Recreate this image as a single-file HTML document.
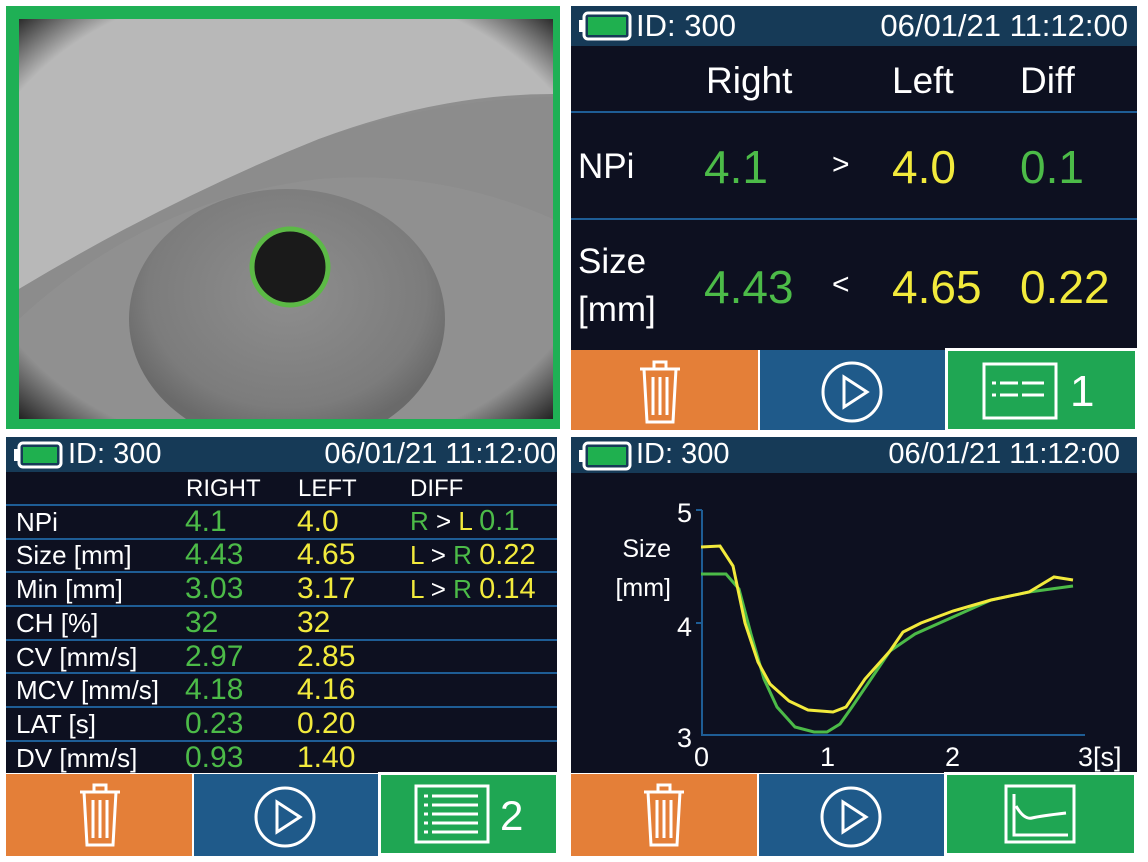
<!DOCTYPE html>
<html><head><meta charset="utf-8"><style>
*{margin:0;padding:0;box-sizing:border-box}
body{width:1148px;height:862px;background:#fff;position:relative;overflow:hidden;font-family:"Liberation Sans",sans-serif;color:#fff}
.a{position:absolute}
.hdr{background:#163a57}
.body{background:#0d1020}
.t{position:absolute;white-space:nowrap;line-height:1}
.g{color:#4cbb48}.y{color:#f2ea3c}
.ln{position:absolute;height:2px;background:#1e5d95}
.or{background:#e47f38}.bl{background:#1f5a8a}.gr{background:#1fa653;border:3px solid #fff}
</style></head><body>

<!-- Top-left eye -->
<div class="a" style="left:6px;top:6px;width:554px;height:423px;background:#1fb055"></div>
<svg class="a" style="left:19px;top:19px" width="534" height="400" viewBox="0 0 534 400">
<defs>
<radialGradient id="vig" cx="50%" cy="50%" r="72%"><stop offset="0.82" stop-color="#000" stop-opacity="0"/><stop offset="1" stop-color="#000" stop-opacity="0.85"/></radialGradient>
<radialGradient id="iris" cx="50%" cy="40%" r="55%"><stop offset="0" stop-color="#8e8e8e"/><stop offset="0.8" stop-color="#7c7c7c"/><stop offset="1" stop-color="#6a6a6a"/></radialGradient>
</defs>
<rect width="534" height="400" fill="#8e8e8e"/>
<path d="M0 0H534V75Q420 75 300 120Q150 180 0 270Z" fill="#b8b8b8"/>
<path d="M0 270Q150 180 300 120Q420 80 534 78V200Q420 150 300 160Q130 180 0 300Z" fill="#8c8c8c"/>
<path d="M0 300Q130 180 300 160Q420 150 534 200V400H0Z" fill="#909090"/>
<ellipse cx="268" cy="300" rx="158" ry="130" fill="url(#iris)"/>
<rect width="534" height="400" fill="url(#vig)"/>
<circle cx="271" cy="248" r="38" fill="#1a1a1a" stroke="#5cb946" stroke-width="5"/>
</svg>

<!-- Top-right -->
<div class="a body" style="left:571px;top:6px;width:566px;height:344px"></div>
<div class="a hdr" style="left:571px;top:6px;width:566px;height:40px"></div>
<svg class="a" style="left:578px;top:11px" width="56" height="30"><rect x="6" y="2" width="46" height="26" rx="4" fill="none" stroke="#fff" stroke-width="3"/><rect x="1" y="9" width="5" height="12" fill="#fff"/><rect x="10" y="6" width="38" height="18" fill="#1fb04f"/></svg>
<div class="t" style="left:636px;top:10px;font-size:31px">ID: 300</div>
<div class="t" style="right:20px;top:10px;font-size:31px">06/01/21 11:12:00</div>
<div class="t" style="left:706px;top:62px;font-size:37px">Right</div>
<div class="t" style="left:892px;top:62px;font-size:37px">Left</div>
<div class="t" style="left:1020px;top:62px;font-size:37px">Diff</div>
<div class="ln" style="left:571px;top:111px;width:566px"></div>
<div class="ln" style="left:571px;top:218px;width:566px"></div>
<div class="t" style="left:578px;top:149px;font-size:35px">NPi</div>
<div class="t g" style="left:704px;top:144px;font-size:46px">4.1</div>
<div class="t" style="left:832px;top:150px;font-size:30px">&gt;</div>
<div class="t y" style="left:892px;top:144px;font-size:46px">4.0</div>
<div class="t g" style="left:1020px;top:144px;font-size:46px">0.1</div>
<div class="t" style="left:578px;top:244px;font-size:35px">Size</div>
<div class="t" style="left:578px;top:292px;font-size:35px">[mm]</div>
<div class="t g" style="left:704px;top:264px;font-size:46px">4.43</div>
<div class="t" style="left:832px;top:270px;font-size:30px">&lt;</div>
<div class="t y" style="left:892px;top:264px;font-size:46px">4.65</div>
<div class="t y" style="left:1020px;top:264px;font-size:46px">0.22</div>
<div class="a or" style="left:571px;top:350px;width:187px;height:80px"></div>
<div class="a bl" style="left:760px;top:350px;width:185px;height:80px"></div>
<div class="a gr" style="left:945px;top:348px;width:193px;height:84px"></div>
<svg class="a" style="left:638px;top:357px" width="44" height="68" viewBox="0 0 44 68"><g fill="none" stroke="#fff" stroke-width="3"><path d="M2 12H42M16 12V5H28V12M6 12L9 65H35L38 12M15 20V58M22 20V58M29 20V58"/></g></svg>
<svg class="a" style="left:820px;top:360px" width="64" height="64"><circle cx="32" cy="32" r="29" fill="none" stroke="#fff" stroke-width="3"/><path d="M24 17L47 32L24 47Z" fill="none" stroke="#fff" stroke-width="3"/></svg>
<svg class="a" style="left:982px;top:362px" width="80" height="58"><rect x="2" y="2" width="72" height="54" fill="none" stroke="#fff" stroke-width="3"/><g stroke="#fff" stroke-width="3"><path d="M10 21h4M18 21h18M40 21h22M10 33h4M18 33h18M40 33h22"/></g></svg>
<div class="t" style="left:1070px;top:370px;font-size:44px">1</div>

<!-- Bottom-left -->
<div class="a body" style="left:6px;top:437px;width:551px;height:336px"></div>
<div class="a hdr" style="left:6px;top:437px;width:551px;height:35px"></div>
<svg class="a" style="left:13px;top:441px" width="52" height="28"><rect x="6" y="2" width="42" height="24" rx="4" fill="none" stroke="#fff" stroke-width="3"/><rect x="1" y="8" width="5" height="12" fill="#fff"/><rect x="10" y="6" width="34" height="16" fill="#1fb04f"/></svg>
<div class="t" style="left:68px;top:440px;font-size:29px">ID: 300</div>
<div class="t" style="right:592px;top:440px;font-size:29px">06/01/21 11:12:00</div>
<div class="t" style="left:186px;top:477px;font-size:24px">RIGHT</div>
<div class="t" style="left:298px;top:477px;font-size:24px">LEFT</div>
<div class="t" style="left:410px;top:477px;font-size:24px">DIFF</div>
<div class="ln" style="left:6px;top:504px;width:551px"></div>
<div class="ln" style="left:6px;top:538px;width:551px"></div>
<div class="ln" style="left:6px;top:571px;width:551px"></div>
<div class="ln" style="left:6px;top:605px;width:551px"></div>
<div class="ln" style="left:6px;top:639px;width:551px"></div>
<div class="ln" style="left:6px;top:672px;width:551px"></div>
<div class="ln" style="left:6px;top:706px;width:551px"></div>
<div class="ln" style="left:6px;top:740px;width:551px"></div>
<div class="t" style="left:16px;top:509px;font-size:26px">NPi</div>
<div class="t" style="left:16px;top:542px;font-size:26px">Size [mm]</div>
<div class="t" style="left:16px;top:576px;font-size:26px">Min [mm]</div>
<div class="t" style="left:16px;top:610px;font-size:26px">CH [%]</div>
<div class="t" style="left:16px;top:644px;font-size:26px">CV [mm/s]</div>
<div class="t" style="left:16px;top:677px;font-size:26px">MCV [mm/s]</div>
<div class="t" style="left:16px;top:711px;font-size:26px">LAT [s]</div>
<div class="t" style="left:16px;top:745px;font-size:26px">DV [mm/s]</div>
<div class="t g" style="left:185px;top:507px;font-size:30px">4.1</div>
<div class="t g" style="left:185px;top:540px;font-size:30px">4.43</div>
<div class="t g" style="left:185px;top:574px;font-size:30px">3.03</div>
<div class="t g" style="left:185px;top:608px;font-size:30px">32</div>
<div class="t g" style="left:185px;top:642px;font-size:30px">2.97</div>
<div class="t g" style="left:185px;top:675px;font-size:30px">4.18</div>
<div class="t g" style="left:185px;top:709px;font-size:30px">0.23</div>
<div class="t g" style="left:185px;top:743px;font-size:30px">0.93</div>
<div class="t y" style="left:297px;top:507px;font-size:30px">4.0</div>
<div class="t y" style="left:297px;top:540px;font-size:30px">4.65</div>
<div class="t y" style="left:297px;top:574px;font-size:30px">3.17</div>
<div class="t y" style="left:297px;top:608px;font-size:30px">32</div>
<div class="t y" style="left:297px;top:642px;font-size:30px">2.85</div>
<div class="t y" style="left:297px;top:675px;font-size:30px">4.16</div>
<div class="t y" style="left:297px;top:709px;font-size:30px">0.20</div>
<div class="t y" style="left:297px;top:743px;font-size:30px">1.40</div>
<div class="t" style="left:410px;top:507px;font-size:26px"><span class="g">R</span> &gt; <span class="y">L</span> <span class="g" style="font-size:29px">0.1</span></div>
<div class="t" style="left:410px;top:541px;font-size:26px"><span class="y">L</span> &gt; <span class="g">R</span> <span class="y" style="font-size:29px">0.22</span></div>
<div class="t" style="left:410px;top:575px;font-size:26px"><span class="y">L</span> &gt; <span class="g">R</span> <span class="y" style="font-size:29px">0.14</span></div>
<div class="a or" style="left:6px;top:774px;width:186px;height:82px"></div>
<div class="a bl" style="left:194px;top:774px;width:184px;height:82px"></div>
<div class="a gr" style="left:378px;top:772px;width:181px;height:84px"></div>
<svg class="a" style="left:78px;top:780px" width="44" height="68" viewBox="0 0 44 68"><g fill="none" stroke="#fff" stroke-width="3"><path d="M2 12H42M16 12V5H28V12M6 12L9 65H35L38 12M15 20V58M22 20V58M29 20V58"/></g></svg>
<svg class="a" style="left:253px;top:785px" width="64" height="64"><circle cx="32" cy="32" r="29" fill="none" stroke="#fff" stroke-width="3"/><path d="M24 17L47 32L24 47Z" fill="none" stroke="#fff" stroke-width="3"/></svg>
<svg class="a" style="left:414px;top:784px" width="80" height="62"><rect x="2" y="2" width="72" height="56" fill="none" stroke="#fff" stroke-width="3"/><g stroke="#fff" stroke-width="3"><path d="M10 12h4M18 12h46M10 21h4M18 21h46M10 30h4M18 30h46M10 39h4M18 39h46M10 48h4M18 48h46"/></g></svg>
<div class="t" style="left:500px;top:795px;font-size:42px">2</div>

<!-- Bottom-right -->
<div class="a body" style="left:571px;top:437px;width:566px;height:336px"></div>
<div class="a hdr" style="left:571px;top:437px;width:566px;height:36px"></div>
<svg class="a" style="left:578px;top:441px" width="56" height="30"><rect x="6" y="2" width="46" height="26" rx="4" fill="none" stroke="#fff" stroke-width="3"/><rect x="1" y="9" width="5" height="12" fill="#fff"/><rect x="10" y="6" width="38" height="18" fill="#1fb04f"/></svg>
<div class="t" style="left:636px;top:440px;font-size:29px">ID: 300</div>
<div class="t" style="right:28px;top:440px;font-size:29px">06/01/21 11:12:00</div>
<svg class="a" style="left:571px;top:437px" width="566" height="336" viewBox="571 437 566 336">
<g stroke="#1e5d95" stroke-width="2" fill="none"><path d="M702 510V735H1085M696 510H702M696 623H702"/></g>
<g fill="#fff" font-family="Liberation Sans,sans-serif" font-size="27">
<text x="677" y="522">5</text><text x="677" y="636">4</text><text x="677" y="747">3</text>
<text x="694" y="766">0</text><text x="820" y="766">1</text><text x="945" y="766">2</text><text x="1078" y="766">3[s]</text>
<text x="671" y="557" text-anchor="end" font-size="25">Size</text><text x="671" y="596" text-anchor="end" font-size="25">[mm]</text>
</g>
<polyline fill="none" stroke="#4cbb48" stroke-width="3" points="701,574 726,574 739,589 751,634 764,679 777,707 795,727 814,732 827,732 840,724 852,707 871,679 890,651 915,634 953,617 991,600 1029,592 1073,586"/>
<polyline fill="none" stroke="#f2ea3c" stroke-width="3" points="701,547 720,546 733,566 745,623 758,662 770,684 789,701 808,710 833,712 846,707 865,679 890,651 903,632 921,623 953,611 991,600 1029,592 1054,577 1073,580"/>
</svg>
<div class="a or" style="left:571px;top:774px;width:186px;height:82px"></div>
<div class="a bl" style="left:759px;top:774px;width:185px;height:82px"></div>
<div class="a gr" style="left:944px;top:772px;width:193px;height:84px"></div>
<svg class="a" style="left:642px;top:780px" width="44" height="68" viewBox="0 0 44 68"><g fill="none" stroke="#fff" stroke-width="3"><path d="M2 12H42M16 12V5H28V12M6 12L9 65H35L38 12M15 20V58M22 20V58M29 20V58"/></g></svg>
<svg class="a" style="left:819px;top:785px" width="64" height="64"><circle cx="32" cy="32" r="29" fill="none" stroke="#fff" stroke-width="3"/><path d="M24 17L47 32L24 47Z" fill="none" stroke="#fff" stroke-width="3"/></svg>
<svg class="a" style="left:1004px;top:784px" width="74" height="62"><rect x="2" y="2" width="68" height="56" fill="none" stroke="#fff" stroke-width="3"/><path d="M10 10V51H64M12 22Q20 36 28 34T62 29" fill="none" stroke="#fff" stroke-width="3"/></svg>
</body></html>
